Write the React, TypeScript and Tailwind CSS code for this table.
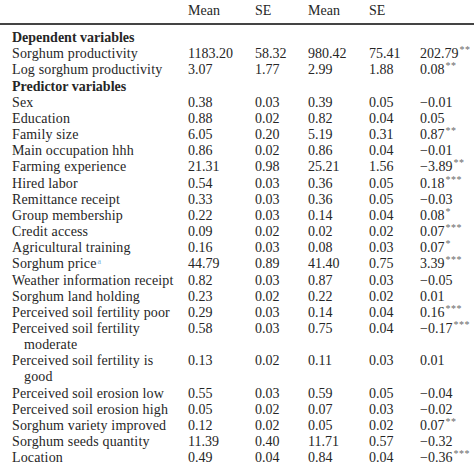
const rows: (string | [string, string, string, string, string, string, string?])[] = [
  "Dependent variables",
  ["Sorghum productivity", "1183.20", "58.32", "980.42", "75.41", "202.79", "**"],
  ["Log sorghum productivity", "3.07", "1.77", "2.99", "1.88", "0.08", "**"],
  "Predictor variables",
  ["Sex", "0.38", "0.03", "0.39", "0.05", "−0.01"],
  ["Education", "0.88", "0.02", "0.82", "0.04", "0.05"],
  ["Family size", "6.05", "0.20", "5.19", "0.31", "0.87", "**"],
  ["Main occupation hhh", "0.86", "0.02", "0.86", "0.04", "−0.01"],
  ["Farming experience", "21.31", "0.98", "25.21", "1.56", "−3.89", "**"],
  ["Hired labor", "0.54", "0.03", "0.36", "0.05", "0.18", "***"],
  ["Remittance receipt", "0.33", "0.03", "0.36", "0.05", "−0.03"],
  ["Group membership", "0.22", "0.03", "0.14", "0.04", "0.08", "*"],
  ["Credit access", "0.09", "0.02", "0.02", "0.02", "0.07", "***"],
  ["Agricultural training", "0.16", "0.03", "0.08", "0.03", "0.07", "*"],
  ["Sorghum price", "44.79", "0.89", "41.40", "0.75", "3.39", "***"],
  ["Weather information receipt", "0.82", "0.03", "0.87", "0.03", "−0.05"],
  ["Sorghum land holding", "0.23", "0.02", "0.22", "0.02", "0.01"],
  ["Perceived soil fertility poor", "0.29", "0.03", "0.14", "0.04", "0.16", "***"],
  ["Perceived soil fertility|moderate", "0.58", "0.03", "0.75", "0.04", "−0.17", "***"],
  ["Perceived soil fertility is|good", "0.13", "0.02", "0.11", "0.03", "0.01"],
  ["Perceived soil erosion low", "0.55", "0.03", "0.59", "0.05", "−0.04"],
  ["Perceived soil erosion high", "0.05", "0.02", "0.07", "0.03", "−0.02"],
  ["Sorghum variety improved", "0.12", "0.02", "0.05", "0.02", "0.07", "**"],
  ["Sorghum seeds quantity", "11.39", "0.40", "11.71", "0.57", "−0.32"],
  ["Location", "0.49", "0.04", "0.84", "0.04", "−0.36", "***"],
];

const grid = "grid grid-cols-[176px_67px_53px_61px_51px_1fr] pl-3";

const Label = ({ text }: { text: string }) => {
  const [first, second] = text.split("|");
  return (
    <div className="tracking-[0.15px]">
      {first}
      {text === "Sorghum price" && (
        <sup className="text-[8px] text-[#7fb4dc] ml-[1px]">a</sup>
      )}
      {second && <div className="pl-3">{second}</div>}
    </div>
  );
};

export default function App() {
  return (
    <div
      className="w-[474px] h-[474px] overflow-hidden bg-white text-[#262626] text-[14px] leading-[16.15px]"
      style={{ fontFamily: '"Liberation Serif", "Times New Roman", serif' }}
    >
      <div className={`${grid} pt-[3px] pb-[4px]`}>
        <div />
        <div>Mean</div>
        <div>SE</div>
        <div>Mean</div>
        <div>SE</div>
        <div />
      </div>
      <div className="h-[2px] bg-[#444]" />
      <div className="pt-[5px]">
        {rows.map((r, i) =>
          typeof r === "string" ? (
            <div key={i} className="pl-3 font-bold">
              {r}
            </div>
          ) : (
            <div key={i} className={grid}>
              <Label text={r[0]} />
              <div>{r[1]}</div>
              <div>{r[2]}</div>
              <div>{r[3]}</div>
              <div>{r[4]}</div>
              <div className="whitespace-nowrap">
                {r[5]}
                {r[6] && (
                  <sup className="text-[10px] text-[#6b6b6b] tracking-[0.5px] ml-[1px]">{r[6]}</sup>
                )}
              </div>
            </div>
          )
        )}
      </div>
    </div>
  );
}
